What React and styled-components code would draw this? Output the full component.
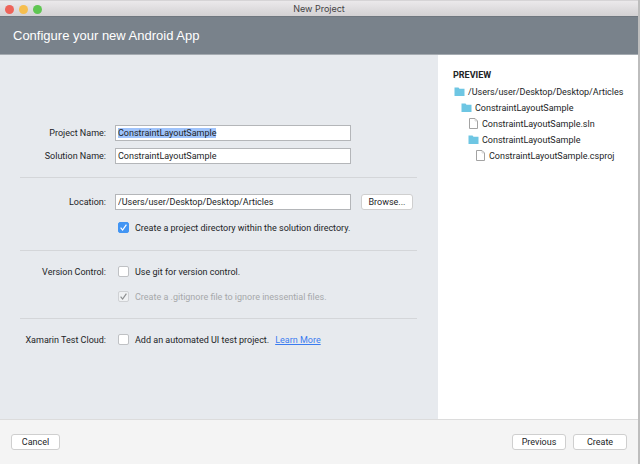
import React, { useEffect, useRef } from 'react'
import styled, { createGlobalStyle } from 'styled-components'

const GlobalStyle = createGlobalStyle`
  * {
    box-sizing: border-box;
  }
  body {
    margin: 0;
    font-family: Roboto, "Liberation Sans", sans-serif;
    font-size: 9px;
    line-height: 16px;
    color: #222426;
  }
`
const Page = styled.div`
  display: flex;
  flex-direction: column;
  min-height: 100vh;
  border-right: 2px solid #bdbdbd;
  background-color: #f4f4f4;
`
const TitleBar = styled.div`
  display: grid;
  grid-template-columns: 1fr auto 1fr;
  align-items: center;
  height: 16px;
  padding: 0 5px;
  background: linear-gradient(#ebe9eb, #d3d1d3);
  border-top: 1px solid #d6d4d6;
`
const Lights = styled.div`
  display: flex;
  gap: 5px;
`
const Light = styled.span`
  width: 9px;
  height: 9px;
  border-radius: 50%;
  background-color: ${props => props.$color};
`
const Title = styled.div`
  color: #444244;
  font-family: Inter, "Liberation Sans", sans-serif;
`
const Header = styled.header`
  display: flex;
  align-items: center;
  height: 39px;
  padding: 0 13px;
  background-color: #79828b;
  border-top: 1px solid #6f777f;
  border-bottom: 1px solid #a5abb1;
`
const Heading = styled.h1`
  margin: 0;
  color: white;
  font-family: "Liberation Sans", Arial, sans-serif;
  font-size: 13px;
  font-weight: normal;
`
const Body = styled.div`
  display: flex;
  flex: 1;
`
const Form = styled.form`
  display: flex;
  flex: 1;
  flex-direction: column;
  justify-content: center;
  padding: 0 21px 2px 20px;
  background-color: #e7eaee;
`
const Section = styled.div`
  display: flex;
  flex-direction: column;
  gap: ${props => props.$gap || 9}px;
  padding: 13px 0;
  border-bottom: 1px solid #d4d6d9;
  &:first-child {
    padding-top: 0;
  }
  &:last-child {
    padding-bottom: 0;
    border-bottom: none;
  }
`
const Location = styled(Section)`
  padding-top: 16px;
  padding-bottom: 14px;
`
const Row = styled.div`
  display: grid;
  grid-template-columns: 86px 1fr 56px;
  align-items: center;
  height: 16px;
`
const Label = styled.label`
  text-align: right;
  white-space: nowrap;
`
const TextBox = styled.input`
  min-width: 0;
  height: 16px;
  margin: 0 10px 0 9px;
  padding: 0 2px;
  border: 1px solid #b4b6b9;
  border-radius: 0;
  outline: none;
  background-color: white;
  color: inherit;
  font: inherit;
  line-height: 14px;
  &::selection {
    background-color: #9fc3fb;
    color: #222426;
  }
`
const Button = styled.button`
  height: 16px;
  min-width: ${props => props.$width || 52}px;
  padding: 0;
  border: 1px solid #cfcfcf;
  border-radius: 3px;
  background-color: white;
  color: inherit;
  font: inherit;
  line-height: 14px;
  justify-self: start;
`
const Option = styled.div`
  display: flex;
  grid-column: 2 / 4;
  align-items: center;
  gap: 6px;
  margin-left: 12px;
  color: ${props => (props.$disabled ? '#a6a8aa' : 'inherit')};
  white-space: nowrap;
`
const Tick = styled.span`
  display: grid;
  width: 11px;
  height: 11px;
  > * {
    grid-area: 1 / 1;
  }
  svg {
    display: none;
    width: 11px;
    height: 11px;
    color: white;
    pointer-events: none;
  }
  input:checked + svg {
    display: block;
  }
  input:disabled + svg {
    color: #8d8f91;
  }
`
const CheckBox = styled.input`
  appearance: none;
  width: 11px;
  height: 11px;
  margin: 0;
  border: 1px solid #bfc1c4;
  border-radius: 2px;
  background-color: white;
  &:checked {
    border-color: #4295f3;
    background-color: #4295f3;
  }
  &:disabled {
    border-color: #cfd1d4;
    background-color: #eff1f3;
  }
`
const Link = styled.a`
  color: #3b7cf0;
`
const Preview = styled.aside`
  width: 200px;
  padding: 12px 0 0 15px;
  background-color: white;
`
const PreviewTitle = styled.h2`
  margin: 0 0 1px;
  font-size: 9px;
  font-weight: bold;
`
const Tree = styled.ul`
  margin: 0;
  padding: 0;
  list-style: none;
`
const Item = styled.li`
  display: flex;
  align-items: center;
  gap: 3px;
  padding-left: ${props => props.$level * 7 + 1}px;
  white-space: nowrap;
  svg {
    flex: none;
    width: 11px;
    height: 12px;
  }
`
const Footer = styled.footer`
  display: flex;
  gap: 7px;
  height: 45px;
  padding: 14px 11px;
  border-top: 1px solid #dcdcdc;
`
const Spacer = styled.div`
  flex: 1;
`

const files = [
  { name: '/Users/user/Desktop/Desktop/Articles', level: 0, folder: true },
  { name: 'ConstraintLayoutSample', level: 1, folder: true },
  { name: 'ConstraintLayoutSample.sln', level: 2 },
  { name: 'ConstraintLayoutSample', level: 2, folder: true },
  { name: 'ConstraintLayoutSample.csproj', level: 3 },
]

function FolderIcon() {
  return (
    <svg viewBox="0 0 11 12" aria-hidden="true">
      <path d="M.5 1.500h4l1 1.200h5V10H.5z" fill="#6ec6e3" />
    </svg>
  )
}

function FileIcon() {
  return (
    <svg viewBox="0 0 11 12" aria-hidden="true">
      <path d="M1.500 .5H7L9.500 3v7.500h-8z" fill="white" stroke="#a3a3a3" />
      <path d="M7 .5V3h2.500" fill="none" stroke="#c4c4c4" strokeWidth=".6" />
    </svg>
  )
}

function Check({ id, children, extra, ...rest }) {
  return (
    <Option $disabled={rest.disabled}>
      <Tick>
        <CheckBox type="checkbox" id={id} {...rest} />
        <svg viewBox="0 0 11 11" aria-hidden="true">
          <path d="M2.600 5.700l2 2.400L8.400 2.700" fill="none" stroke="currentColor" strokeWidth="1.200" />
        </svg>
      </Tick>
      <label htmlFor={id}>{children}</label>
      {extra}
    </Option>
  )
}

function App() {
  const projectName = useRef(null)

  useEffect(() => {
    projectName.current.focus()
    projectName.current.select()
  }, [])

  return (
    <Page>
      <GlobalStyle />
      <TitleBar>
        <Lights>
          <Light $color="#ee6359" />
          <Light $color="#f6be4e" />
          <Light $color="#5fc652" />
        </Lights>
        <Title>New Project</Title>
      </TitleBar>
      <Header>
        <Heading>Configure your new Android App</Heading>
      </Header>
      <Body>
        <Form id="project" onSubmit={e => e.preventDefault()}>
          <Section $gap={7}>
            <Row>
              <Label htmlFor="name">Project Name:</Label>
              <TextBox id="name" ref={projectName} defaultValue="ConstraintLayoutSample" spellCheck={false} />
            </Row>
            <Row>
              <Label htmlFor="solution">Solution Name:</Label>
              <TextBox id="solution" defaultValue="ConstraintLayoutSample" spellCheck={false} />
            </Row>
          </Section>
          <Location $gap={10}>
            <Row>
              <Label htmlFor="location">Location:</Label>
              <TextBox id="location" defaultValue="/Users/user/Desktop/Desktop/Articles" spellCheck={false} />
              <Button type="button">Browse...</Button>
            </Row>
            <Row>
              <Check id="directory" defaultChecked>Create a project directory within the solution directory.</Check>
            </Row>
          </Location>
          <Section>
            <Row>
              <Label htmlFor="git">Version Control:</Label>
              <Check id="git">Use git for version control.</Check>
            </Row>
            <Row>
              <Check id="gitignore" defaultChecked disabled>Create a .gitignore file to ignore inessential files.</Check>
            </Row>
          </Section>
          <Section>
            <Row>
              <Label htmlFor="test">Xamarin Test Cloud:</Label>
              <Check id="test" extra={<Link href="#learn">Learn More</Link>}>Add an automated UI test project.</Check>
            </Row>
          </Section>
        </Form>
        <Preview>
          <PreviewTitle>PREVIEW</PreviewTitle>
          <Tree>
            {files.map((file, i) => (
              <Item key={i} $level={file.level}>
                {file.folder ? <FolderIcon /> : <FileIcon />}
                {file.name}
              </Item>
            ))}
          </Tree>
        </Preview>
      </Body>
      <Footer>
        <Button type="button" $width={49}>Cancel</Button>
        <Spacer />
        <Button type="button" $width={54}>Previous</Button>
        <Button type="submit" form="project" $width={54}>Create</Button>
      </Footer>
    </Page>
  )
}

export default App
